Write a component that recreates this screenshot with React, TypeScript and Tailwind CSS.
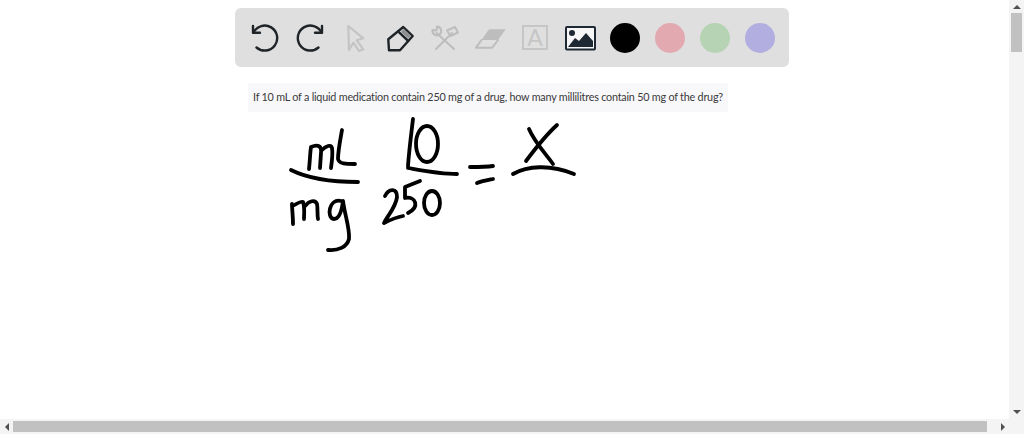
import React from 'react';

const Icon = ({ children }: { children: React.ReactNode }) => (
    <svg width="30" height="30" viewBox="0 0 30 30" fill="none" strokeLinecap="round" strokeLinejoin="round" className="shrink-0 overflow-visible">
        {children}
    </svg>
);

const swatches = ['bg-black', 'bg-[#e3a9b1]', 'bg-[#b6d3b3]', 'bg-[#b3aee0]'];

const Toolbar = () => (
    <div className="flex h-[59px] w-[554px] items-center gap-[15px] rounded-md bg-[#dfdfdf] pl-[15px]">
        <Icon>
            <g stroke="#1f2428" strokeWidth="2.4">
                <path d="M3.5 9.5A12.5 12.5 0 1 1 6.5 24.5" />
                <path d="M3 3V9.7H10" />
            </g>
        </Icon>
        <Icon>
            <g stroke="#1f2428" strokeWidth="2.4">
                <path d="M26.5 9.5A12.5 12.5 0 1 0 23.5 24.5" />
                <path d="M27 3V9.7H20" />
            </g>
        </Icon>
        <Icon>
            <path d="M8.3 3L23.3 15.3L16.7 17.3L23.3 26.3L19 28L13.3 19.7L9 27Z" stroke="#c4c4c4" strokeWidth="2.2" />
        </Icon>
        <Icon>
            <path d="M3.3 16.3L18.3 4L27.7 13L15 27.3H4Z" stroke="#1f2428" strokeWidth="2.4" />
            <path d="M13.3 8.7L23.3 18" stroke="#1f2428" strokeWidth="2.4" />
            <path d="M18.3 6L25.5 13L23.3 15.5L16 9Z" fill="#8b8d8f" />
        </Icon>
        <Icon>
            <g stroke="#bdbdbd" strokeWidth="2">
                <path d="M6.5 10L24 26" />
                <path d="M22 10L6 26" />
                <path d="M2.5 7A4.5 4.5 0 0 0 9.5 11.5A4.5 4.5 0 0 0 7 3.5L6.5 7.5Z" />
                <path d="M17 7.5L25 4L28 9.5L20.5 13Z" />
            </g>
        </Icon>
        <Icon>
            <path d="M14 6.3H30.7L23 17H6.5Z" fill="#bdbdbd" />
            <path d="M6.5 17L1 24.7H17.3L23 17" stroke="#bdbdbd" strokeWidth="2" />
        </Icon>
        <div className="flex h-[30px] w-[30px] shrink-0 items-center justify-center">
            <div className="flex h-[25px] w-[26px] items-center justify-center border-2 border-[#c6c6c6] font-['Lato',sans-serif] text-[23px] leading-none text-[#c6c6c6]">
                A
            </div>
        </div>
        <Icon>
            <rect x="1" y="4" width="29" height="22.5" rx="1" fill="#f7f7f7" stroke="#1f2933" strokeWidth="2" />
            <circle cx="7" cy="10" r="3" fill="#1f2933" />
            <path d="M3 24L10 15L14 18L21 10L28 18V24Z" fill="#1f2933" />
        </Icon>
        {swatches.map((color) => (
            <div key={color} className={`h-[30px] w-[30px] shrink-0 rounded-full ${color}`} />
        ))}
    </div>
);

// handwritten working on the whiteboard
const Ink = () => (
    <svg width="300" height="144" viewBox="280 112 300 144" fill="none" stroke="#000" strokeWidth="3.8" strokeLinecap="round" strokeLinejoin="round" className="mt-[1px] ml-[45px] block">
        <path d="M309 168C310 160 310 152 311 146C318 143 322 145 321 152L320 167" />
        <path d="M322 149C326 145 331 143 332 147C333 153 332 160 331 167" />
        <path d="M342 129C340 140 338 150 338 158C339 163 346 163 355 163" />
        <path d="M291 169C305 176 325 181 358 181" />
        <path d="M293 223C293 215 292 208 292 203C292 208 299 199 303 201C305 206 304 212 304 218" />
        <path d="M305 205C309 200 315 198 317 203C318 208 317 213 318 218" />
        <path d="M341 200C329 197 326 217 334 218C340 218 342 208 343 200C345 215 350 228 349 238C347 246 338 250 328 249" />
        <path d="M413 118C411 135 409 150 408 165" />
        <ellipse cx="427" cy="143" rx="11" ry="18" />
        <path d="M408 167C425 170 440 173 457 173" />
        <path d="M385 195C389 187 397 187 397 196C396 206 388 214 384 222C390 219 397 216 403 215" />
        <path d="M420 180L405 186L405 197C416 195 420 206 408 212" />
        <ellipse cx="432" cy="202" rx="8" ry="12" />
        <path d="M470 166C478 166 486 166 493 165" />
        <path d="M477 182C482 180 488 179 493 178" />
        <path d="M529 128C535 142 546 153 553 163" />
        <path d="M557 124C546 134 535 148 526 160" />
        <path d="M513 173C527 165 550 163 574 173" />
    </svg>
);

export default function App() {
    return (
        <div className="flex h-screen w-full flex-col overflow-hidden bg-white font-['Lato',sans-serif]">
            <div className="flex min-h-0 flex-1">
                <main className="min-w-0 flex-1 pt-2 pl-[235px]">
                    <Toolbar />
                    <div className="mt-4 ml-[13px] flex h-[29px] w-[480px] items-center bg-[#f8f8fb] pl-[5px] text-[10.8px] tracking-[-0.22px] whitespace-nowrap text-[#3a3a3a]">
                        If 10 mL of a liquid medication contain 250 mg of a drug, how many millilitres contain 50 mg of the drug?
                    </div>
                    <Ink />
                </main>
                <div className="flex w-[15px] shrink-0 flex-col items-center bg-[#f4f4f4]">
                    <div className="mt-[5px] h-0 w-0 border-x-[4px] border-b-[4px] border-x-transparent border-b-[#505050]" />
                    <div className="mt-[4px] h-[39px] w-[11px] bg-[#c1c1c1]" />
                    <div className="mt-auto mb-[5px] h-0 w-0 border-x-[4px] border-t-[4px] border-x-transparent border-t-[#505050]" />
                </div>
            </div>
            <div className="flex h-[15px] shrink-0 items-center bg-[#f4f4f4]">
                <div className="ml-[5px] h-0 w-0 border-y-[4px] border-r-[4px] border-y-transparent border-r-[#505050]" />
                <div className="ml-[4px] h-[11px] w-[974px] bg-[#c1c1c1]" />
                <div className="ml-[14px] h-0 w-0 border-y-[4px] border-l-[4px] border-y-transparent border-l-[#505050]" />
            </div>
        </div>
    );
}
